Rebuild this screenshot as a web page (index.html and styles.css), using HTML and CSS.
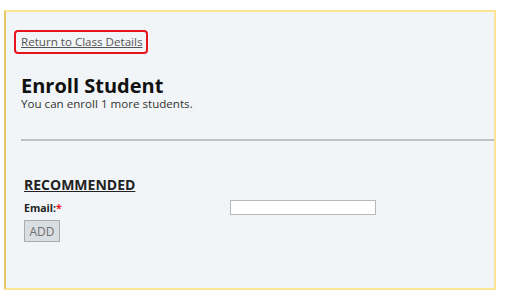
FILE: index.html
```html
<!DOCTYPE html>
<html lang="en">
<head>
    <meta charset="UTF-8">
    <title>Enroll Student</title>
    <link rel="stylesheet" href="styles.css">
</head>
<body>
    <div class="panel">
        <div class="back-row">
            <span class="callout"><a href="#" class="back-link">Return to Class Details</a></span>
        </div>
        <h1>Enroll Student</h1>
        <p class="note">You can enroll 1 more students.</p>
        <hr class="divider">
        <div class="section">
            <h2>RECOMMENDED</h2>
            <div class="field-row">
                <label for="email">Email:<span class="req">*</span></label>
                <input type="text" id="email">
            </div>
            <button type="button" class="add-btn">ADD</button>
        </div>
    </div>
</body>
</html>
```

FILE: styles.css
```css
/* Page */
body {
    margin: 0;
    background: #fff;
    font-family: "Open Sans", "Noto Sans", sans-serif;
    color: #222;
}

.panel {
    box-sizing: border-box;
    margin: 10px 10px 0 4px;
    height: 280px;
    background: #f2f5f7;
    border: 2px solid #fde494;
    border-left-color: #e8c866;
    padding: 17px 0 0 15px;
}

/* Back link with red highlight box */
.back-row {
    height: 24px;
}

.callout {
    display: inline-block;
    margin-left: -7px;
    padding: 3px 3px 3px 5px;
    border: 2px solid #e8141c;
    border-radius: 4px;
}

.back-link {
    display: block;
    font-size: 11.6px;
    line-height: 14px;
    color: #555;
    text-decoration: underline;
}

h1 {
    margin: 23px 0 0;
    font-size: 20px;
    line-height: 20px;
    font-weight: 700;
    color: #111;
}

.note {
    margin: 0;
    font-size: 11.6px;
    line-height: 16px;
    color: #333;
}

.divider {
    margin: 27px 0 0;
    border: none;
    height: 2px;
    background: #bfc0c1;
}

/* Recommended section */
.section {
    padding: 35px 0 0 3px;
}

h2 {
    margin: 0;
    font-size: 14px;
    line-height: 17px;
    font-weight: 700;
    text-decoration: underline;
    color: #222;
}

.field-row {
    display: grid;
    grid-template-columns: 206px 146px;
    align-items: center;
    margin-top: 7px;
}

.field-row label {
    font-size: 10.5px;
    font-weight: 700;
    color: #222;
}

.req {
    color: #e8141c;
}

.field-row input {
    box-sizing: border-box;
    width: 146px;
    height: 15px;
    margin: 0;
    padding: 0 2px;
    border: 1px solid #b8b8b8;
    background: #fff;
}

.add-btn {
    margin-top: 5px;
    width: 36px;
    height: 22px;
    padding: 0;
    background: #d9dee2;
    border: 1px solid #a9acae;
    color: #707070;
    font-family: "Open Sans", "Noto Sans", sans-serif;
    font-size: 12px;
}
```
